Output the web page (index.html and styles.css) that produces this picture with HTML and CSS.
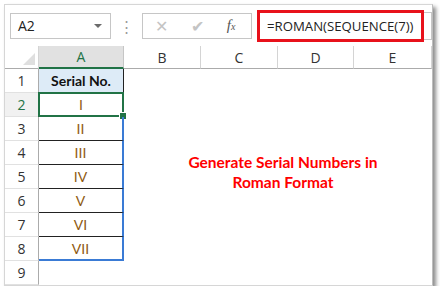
FILE: index.html
```html
<!DOCTYPE html>
<html lang="en">
<head>
<meta charset="UTF-8">
<title>ROMAN SEQUENCE</title>
<link rel="stylesheet" href="styles.css">
</head>
<body>
<div class="window">
  <div class="toolbar">
    <div class="namebox">
      <span>A2</span>
      <span class="caret"></span>
    </div>
    <div class="dots">&#8942;</div>
    <div class="buttons">
      <span class="btn-x">&#10005;</span>
      <span class="btn-ok">&#10004;</span>
      <span class="btn-fx">f<small>x</small></span>
    </div>
    <div class="formula">
      <div class="highlight">=ROMAN(SEQUENCE(7))</div>
    </div>
  </div>

  <div class="sheet">
    <div class="grid">
      <div class="corner"><span class="tri"></span></div>
      <div class="colhead active">A</div>
      <div class="colhead">B</div>
      <div class="colhead">C</div>
      <div class="colhead">D</div>
      <div class="colhead">E</div>

      <div class="rowhead">1</div>
      <div class="cell title">Serial No.</div>
      <div class="blank"></div><div class="blank"></div><div class="blank"></div><div class="blank"></div>

      <div class="rowhead active">2</div>
      <div class="cell roman selected">I<span class="handle"></span></div>
      <div class="blank"></div><div class="blank"></div><div class="blank"></div><div class="blank"></div>

      <div class="rowhead">3</div>
      <div class="cell roman spill">II</div>
      <div class="blank"></div><div class="blank"></div><div class="blank"></div><div class="blank"></div>

      <div class="rowhead">4</div>
      <div class="cell roman spill">III</div>
      <div class="blank"></div><div class="blank"></div><div class="blank"></div><div class="blank"></div>

      <div class="rowhead">5</div>
      <div class="cell roman spill">IV</div>
      <div class="blank"></div><div class="blank"></div><div class="blank"></div><div class="blank"></div>

      <div class="rowhead">6</div>
      <div class="cell roman spill">V</div>
      <div class="blank"></div><div class="blank"></div><div class="blank"></div><div class="blank"></div>

      <div class="rowhead">7</div>
      <div class="cell roman spill">VI</div>
      <div class="blank"></div><div class="blank"></div><div class="blank"></div><div class="blank"></div>

      <div class="rowhead">8</div>
      <div class="cell roman spill last">VII</div>
      <div class="blank"></div><div class="blank"></div><div class="blank"></div><div class="blank"></div>

      <div class="rowhead">9</div>
      <div class="blank"></div>
      <div class="blank"></div><div class="blank"></div><div class="blank"></div><div class="blank"></div>
    </div>
    <div class="note">Generate Serial Numbers in<br>Roman Format</div>
  </div>
</div>
</body>
</html>
```

FILE: styles.css
```css
body {
  margin: 0;
  background: #fff;
  font-family: "Open Sans", Arial, sans-serif;
}

.window {
  position: relative;
  margin: 4px 0 0 4px;
  width: 427px;
  height: 280px;
  border: 1px solid #d6d6d6;
  border-right: 1px solid #bdbdbd;
  background: #fff;
  box-shadow: 3px 3px 4px rgba(0, 0, 0, 0.45);
  overflow: hidden;
}

.toolbar {
  display: flex;
  align-items: center;
  height: 41px;
  padding-left: 5px;
}

.namebox {
  display: flex;
  align-items: center;
  justify-content: space-between;
  box-sizing: border-box;
  width: 101px;
  height: 26px;
  border: 1px solid #c6c6c6;
  padding: 0 8px 0 7px;
  font-size: 14px;
  color: #222;
}

.caret {
  width: 0;
  height: 0;
  border-left: 4px solid transparent;
  border-right: 4px solid transparent;
  border-top: 4px solid #6b6b6b;
}

.dots {
  width: 31px;
  text-align: center;
  color: #9a9a9a;
  font-size: 15px;
}

.buttons {
  display: flex;
  align-items: center;
  justify-content: space-around;
  box-sizing: border-box;
  width: 110px;
  height: 26px;
  border: 1px solid #c6c6c6;
  color: #c4c4c4;
  font-size: 16px;
  padding: 0 4px 0 0;
}

.btn-fx {
  font-family: "Liberation Serif", serif;
  font-style: italic;
  font-size: 15px;
  color: #555;
}

.btn-fx small {
  font-size: 10px;
}

.formula {
  flex: 1;
  height: 26px;
  margin-left: 5px;
  border: 1px solid #c6c6c6;
  border-left: none;
  position: relative;
}

.highlight {
  position: absolute;
  left: 0;
  top: -3px;
  width: 154px;
  height: 26px;
  border: 3px solid #e8111b;
  font-size: 13.2px;
  line-height: 26px;
  padding-left: 7px;
  color: #222;
  background: #fff;
}

.sheet {
  position: relative;
}

.grid {
  display: grid;
  grid-template-columns: 34px 85px 77px 77px 76px 78px;
  grid-template-rows: 23px repeat(9, 24px);
}

.corner {
  position: relative;
  border-right: 1px solid #d4d4d4;
  border-bottom: 1px solid #ababab;
}

.tri {
  position: absolute;
  right: 3px;
  bottom: 3px;
  width: 0;
  height: 0;
  border-left: 12px solid transparent;
  border-bottom: 12px solid #dfdfdf;
}

.colhead {
  display: flex;
  align-items: center;
  justify-content: center;
  border-right: 1px solid #d4d4d4;
  border-bottom: 1px solid #ababab;
  font-size: 14px;
  color: #333;
}

.colhead.active {
  background: #e1e1e1;
  color: #217346;
  border-bottom: 2px solid #217346;
  border-right-color: #c6c6c6;
}

.rowhead {
  display: flex;
  align-items: center;
  justify-content: center;
  border-right: 1px solid #ababab;
  border-bottom: 1px solid #e1e1e1;
  font-size: 14px;
  color: #333;
}

.rowhead.active {
  color: #217346;
  background: #f1f1f1;
}

.blank {
  background: #fff;
}

.cell {
  position: relative;
  display: flex;
  align-items: center;
  justify-content: center;
  border-bottom: 1px solid #222;
  border-right: 1px solid #222;
  font-family: "Lato", "Open Sans", sans-serif;
  font-size: 14px;
}

.title {
  background: #ddebf7;
  font-weight: bold;
  color: #111;
}

.roman {
  color: #8f5a12;
}

.spill {
  border-right: 2px solid #3a7bd5;
}

.spill.last {
  border-bottom: 2px solid #3a7bd5;
}

.selected {
  border: 2px solid #217346;
  margin: -1px 0 0 -1px;
}

.handle {
  position: absolute;
  right: -5px;
  bottom: -5px;
  width: 6px;
  height: 6px;
  background: #217346;
  border: 1px solid #fff;
}

.note {
  position: absolute;
  left: 173px;
  top: 106px;
  width: 210px;
  text-align: center;
  font-family: "Lato", "Open Sans", sans-serif;
  font-weight: bold;
  font-size: 15.5px;
  line-height: 20px;
  color: #ff0000;
}
```
